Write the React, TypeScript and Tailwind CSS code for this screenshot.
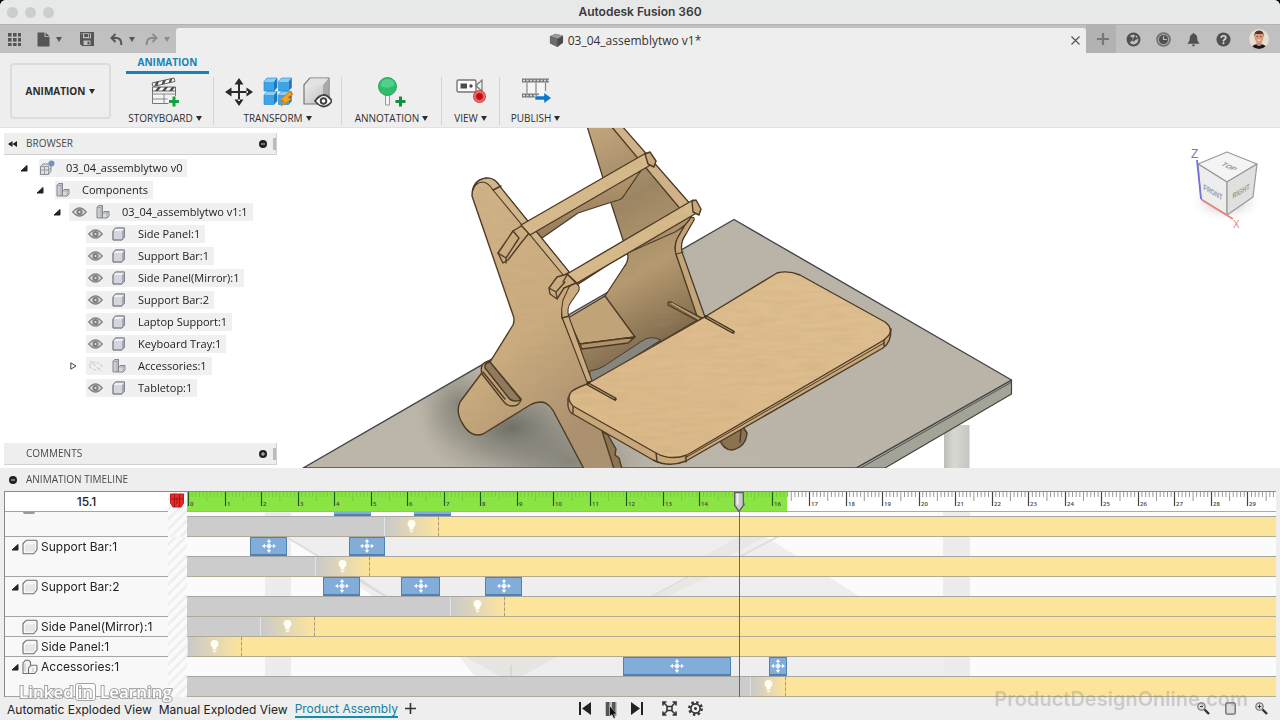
import React from "react";

const SECOND = 36.53;
const px = (t: number) => Math.round(t * SECOND) + 1;

type Track =
  | { kind: "moves"; moves: [number, number][] }
  | { kind: "visibility"; start: number; end: number };

type Group = { name: string; icon: "box" | "assembly"; open: boolean; tracks: Track[] };

const groups: Group[] = [
  {
    name: "Support Bar:1",
    icon: "box",
    open: true,
    tracks: [
      { kind: "moves", moves: [[1.7, 2.7], [4.4, 5.4]] },
      { kind: "visibility", start: 3.5, end: 4.98 },
    ],
  },
  {
    name: "Support Bar:2",
    icon: "box",
    open: true,
    tracks: [
      { kind: "moves", moves: [[3.7, 4.7], [5.83, 6.9], [8.13, 9.13]] },
      { kind: "visibility", start: 7.2, end: 8.68 },
    ],
  },
  { name: "Side Panel(Mirror):1", icon: "box", open: false, tracks: [{ kind: "visibility", start: 2, end: 3.48 }] },
  { name: "Side Panel:1", icon: "box", open: false, tracks: [{ kind: "visibility", start: 0, end: 1.48 }] },
  {
    name: "Accessories:1",
    icon: "assembly",
    open: true,
    tracks: [
      { kind: "moves", moves: [[11.9, 14.87], [15.9, 16.4]] },
      { kind: "visibility", start: 15.4, end: 16.38 },
    ],
  },
];

function Caret({ className = "" }: { className?: string }) {
  return (
    <svg viewBox="0 0 6 5" className={`h-[5px] w-[6px] shrink-0 ${className}`} fill="currentColor">
      <path d="M0 0h6L3 5z" />
    </svg>
  );
}

function BoxIcon({ className = "size-4" }: { className?: string }) {
  return (
    <svg viewBox="0 0 16 16" className={className} strokeLinejoin="round">
      <path d="M2 5 4.500 2H13.500v9L11 14H2z" fill="#d3d6df" stroke="#85878d" />
      <path d="M11 5v8.500l2.200-2.800V2.400z" fill="#a5a9b6" />
      <path d="M2.500 5 4.800 2.500h8.400L11 5z" fill="#eff0f4" />
      <path d="M2 5 4.500 2H13.500v9L11 14H2z" fill="none" stroke="#85878d" />
    </svg>
  );
}

function AssemblyIcon({ className = "size-4" }: { className?: string }) {
  return (
    <svg viewBox="0 0 16 16" className={className} strokeLinejoin="round" stroke="#84868c">
      <path d="M2 3.500 3.500 1.500h4V14H2z" fill="#cbced6" />
      <path d="M7.500 9 9 7.500h5V12l-2 2H7.500z" fill="#d9dbe2" />
      <path d="M7.500 9H12l2-1.500M12 9v5M2 3.500h4l1.500-2M6 3.500V14" fill="none" strokeWidth=".6" />
    </svg>
  );
}

function RowBox() {
  return (
    <svg viewBox="0 0 16 16" className="size-4 shrink-0" strokeLinejoin="round">
      <path d="M1 4.500 4.500 1.200H14a1 1 0 0 1 1 1V11l-3.500 3.800H2a1 1 0 0 1-1-1z" fill="#f6f6f6" stroke="#707070" strokeWidth="1.100" />
      <path d="M3 5.500h8v7H3z" fill="#e6e6e6" />
      <path d="M12 5v8.500" fill="none" stroke="#d4d4d4" />
    </svg>
  );
}

function RowAssembly() {
  return (
    <svg viewBox="0 0 16 16" className="size-4 shrink-0" strokeLinejoin="round" fill="#f4f4f4" stroke="#707070" strokeWidth="1.100">
      <path d="M1 4 3.500 1.200h3L8.500 3v11.500H1z" />
      <path d="M6.500 9 9 6.200h5.500L15 7v4.500l-2.500 3h-6z" />
      <path d="M3 4.500v8M11 9v4" stroke="#c4c4c4" />
    </svg>
  );
}

function Eye({ off = false }: { off?: boolean }) {
  if (off)
    return (
      <svg viewBox="0 0 15 10" className="h-[10px] w-[15px]" fill="none" stroke="#d2d2d2" strokeWidth="1.300">
        <path d="M1 5Q7.500-2.500 14 5Q7.500 12.500 1 5zM2 0l11 10" strokeDasharray="3 1.500" />
      </svg>
    );
  return (
    <svg viewBox="0 0 15 10" className="h-[10px] w-[15px]">
      <path d="M.800 5Q7.500-3 14.200 5Q7.500 13 .800 5z" fill="#dcdcdc" stroke="#858585" strokeWidth="1.400" />
      <circle cx="7.500" cy="5" r="3.100" fill="#808080" />
      <circle cx="7.500" cy="5" r="1.100" fill="#dedede" />
    </svg>
  );
}

function OpenMark() {
  return (
    <svg viewBox="0 0 8 8" className="size-[8px] shrink-0">
      <path d="M7 1.500V7H1z" fill="#222" stroke="#222" strokeLinejoin="round" />
    </svg>
  );
}

function TopIcons() {
  return (
    <div className="flex w-44 shrink-0 items-center bg-[#c0c0c0] pl-2 text-[#555]">
      <button aria-label="Data panel" className="mr-4">
        <svg viewBox="0 0 13 13" className="size-[13px]" fill="currentColor">
          {[0, 5, 10].map((y) => [0, 5, 10].map((x) => <rect key={`${x}-${y}`} x={x} y={y} width="3.600" height="3.600" />))}
        </svg>
      </button>
      <button aria-label="File" className="mr-[18px] flex items-center gap-1.5">
        <svg viewBox="0 0 13 15" className="h-[15px] w-[13px]" fill="currentColor">
          <path d="M.500.500h7v4.500h5v9.500H.500zM8.500.500l4 3.700h-4z" />
        </svg>
        <Caret />
      </button>
      <button aria-label="Save" className="mr-4">
        <svg viewBox="0 0 14 14" className="size-[14px]" fill="currentColor" fillRule="evenodd">
          <path d="M0 0h14v14H2L0 12zM3 1.200v5h8v-5zM3.500 8.500V13h7V8.500zM1.200 1.200v1h1v-1z" />
          <path d="M4.200 2h4v3h-4zM7.500 9.500h2v3h-2zM9 1.500h1v4H9z" />
        </svg>
      </button>
      <button aria-label="Undo" className="mr-[10px] flex items-center gap-1.5">
        <svg viewBox="0 0 13 13" className="size-[13px]" fill="none" stroke="currentColor" strokeWidth="2">
          <path d="M1.500 5H7q4.500.500 4.300 7M5.500 1 1.500 5l4 4" />
        </svg>
        <Caret />
      </button>
      <button aria-label="Redo" className="flex items-center gap-1.5 text-[#8b8b8b]">
        <svg viewBox="0 0 13 13" className="size-[13px]" fill="none" stroke="currentColor" strokeWidth="2">
          <path d="M11.500 5H6Q1.500 5.500 1.700 12M7.500 1l4 4-4 4" />
        </svg>
        <Caret />
      </button>
    </div>
  );
}

function AccountIcons() {
  return (
    <div className="flex w-[194px] shrink-0 items-center bg-[#c0c0c0] text-[#505050]">
      <button aria-label="New tab" className="mr-[10px] flex h-full w-[30px] items-center justify-center bg-[#b2b2b2] pl-1">
        <svg viewBox="0 0 12 12" className="size-3" stroke="#777" strokeWidth="2.200">
          <path d="M6 0v12M0 6h12" />
        </svg>
      </button>
      <button aria-label="Extensions" className="mr-[15px]">
        <svg viewBox="0 0 16 16" className="size-[15px]">
          <circle cx="8" cy="8" r="6.300" fill="none" stroke="currentColor" strokeWidth="2.200" />
          <path d="M2 3.500 7.500 6 6 9.500 2.500 12.500zM8.500 5.500q.500-2.500 3-2.500L10 5l1.500 1 2-1q-.500 3-3 3L8 10.500 6.500 9z" fill="currentColor" />
        </svg>
      </button>
      <button aria-label="Job status" className="mr-[16px]">
        <svg viewBox="0 0 16 16" className="size-[15px]">
          <circle cx="8" cy="8" r="7" fill="#a2a2a2" stroke="#707070" strokeWidth="1.600" />
          <circle cx="8" cy="8" r="4.800" fill="currentColor" />
          <path d="M8 4.500V8h3.500" fill="none" stroke="#c0c0c0" strokeWidth="1.300" />
        </svg>
      </button>
      <button aria-label="Notifications" className="mr-[16px]">
        <svg viewBox="0 0 14 16" className="h-[15px] w-[13px]" fill="currentColor">
          <path d="M7 1q1 0 1 1.200Q11 3 11 7q0 3.500 2.500 5.500H.500Q3 10.500 3 7q0-4 3-4.800Q6 1 7 1zM5.500 13.500h3Q8.500 15.500 7 15.500T5.500 13.500z" />
        </svg>
      </button>
      <button aria-label="Help" className="mr-[18px]">
        <svg viewBox="0 0 16 16" className="size-[15px]">
          <circle cx="8" cy="8" r="7.500" fill="currentColor" />
          <path d="M5.500 6.200Q5.700 4 8 4t2.500 2.200Q10.500 7.500 8 9v1" fill="none" stroke="#ddd" strokeWidth="1.700" />
          <circle cx="8" cy="12" r="1.100" fill="#ddd" />
        </svg>
      </button>
      <button aria-label="Account">
        <svg viewBox="0 0 20 20" className="size-[20px]">
          <clipPath id="avatar"><circle cx="10" cy="10" r="10" /></clipPath>
          <g clipPath="url(#avatar)">
            <path d="M0 0h20v20H0z" fill="#e6dfd2" />
            <path d="M2 20q1-5 8-5t8 5z" fill="#191a1e" />
            <path d="M7.500 12h5v4q-2.500 2-5 0z" fill="#c98a68" />
            <ellipse cx="10" cy="8.500" rx="4.300" ry="5.600" fill="#d9997a" />
            <path d="M5.400 8Q4.500 1.500 10 1.400T14.600 8l-1-3.200q-3.500.500-7 0z" fill="#5b3420" />
            <path d="M8 10.800h4q-2 2-4 0z" fill="#fff" />
            <path d="M7.500 7.600h1.500M11 7.600h1.500" stroke="#6a3b28" strokeWidth=".8" />
          </g>
        </svg>
      </button>
    </div>
  );
}

function StoryboardIcon() {
  return (
    <svg viewBox="0 0 30 30" className="size-[30px]" strokeLinejoin="round">
      <path d="M2.500 12.500h23v14h-23z" fill="#f3f3f3" stroke="#777" />
      <path d="M2.500 17h23M2.500 22h15M14 22v4.500M14 17v5" stroke="#888" fill="none" />
      <path d="M2.500 10h23v4h-23zM2 6 24 1l1 3.500L3 9.500z" fill="#f6f6f6" stroke="#666" />
      <path d="m5 14 3-4h3l-3 4zm7 0 3-4h3l-3 4zm7 0 3-4h3l-3 4zM4.500 9 6 5l3-.700L7.500 8.300zm7-1.600L13 3.500l3-.700-1.500 4zm7-1.600L20 2l2.500-.500L21 5.300z" fill="#4a4a4a" />
      <path d="M24 19v11M18.500 24.500h11" stroke="#eee" strokeWidth="5" />
      <path d="M24 19.500v10M19 24.500h10" stroke="#12a33b" strokeWidth="3" />
    </svg>
  );
}

function MoveIcon() {
  return (
    <svg viewBox="0 0 30 30" className="size-[30px]" fill="#2a2a2a">
      <path d="M14 6h2v18h-2zM6 14h18v2H6zM15 1l4.500 6.500h-9zM15 29l4.500-6.500h-9zM1 15l6.500-4.500v9zM29 15l-6.500-4.500v9z" />
    </svg>
  );
}

function ExplodeIcon() {
  const cubes = [[1, 1], [15.5, 1], [1, 14.5], [15.5, 14.5]];
  return (
    <svg viewBox="0 0 30 30" className="size-[30px]" strokeLinejoin="round">
      {cubes.map(([x, y]) => (
        <g key={`${x}-${y}`} transform={`translate(${x} ${y})`}>
          <path d="M0 3.500h10V13H0z" fill="#3da4e6" />
          <path d="M0 3.500 3 0h10l-3 3.500z" fill="#8bcdf6" />
          <path d="M10 3.500 13 0v9.500L10 13z" fill="#1679c2" />
          <path d="M0 3.500 3 0h10v9.500L10 13H0z" fill="none" stroke="#1f83c8" strokeWidth=".6" />
        </g>
      ))}
      <path d="m26 15-9 8 4 1-3 5 11-7-4-1.500L30 17z" fill="#f8a11f" stroke="#c97708" strokeWidth=".8" />
    </svg>
  );
}

function ShowIcon() {
  return (
    <svg viewBox="0 0 30 32" className="h-8 w-[30px]" strokeLinejoin="round">
      <defs>
        <linearGradient id="cubeFront" x2="1" y2="1"><stop stopColor="#f2f2f2" /><stop offset="1" stopColor="#bdbdbd" /></linearGradient>
      </defs>
      <path d="M2 9 8 2h19v20l-5 6H2z" fill="url(#cubeFront)" stroke="#777" strokeWidth="1.200" />
      <path d="M21 9l5.500-6.500v19L21 28z" fill="#a9a9a9" />
      <path d="M3 8.500 8.500 2.500H26L21 8.500z" fill="#e2e2e2" />
      <path d="M13 25q9-12 17 0q-8 11-17 0z" fill="#fff" stroke="#444" strokeWidth="1.800" />
      <circle cx="21.500" cy="25" r="2.800" fill="none" stroke="#444" strokeWidth="2" />
    </svg>
  );
}

function AnnotationIcon() {
  return (
    <svg viewBox="0 0 30 30" className="size-[30px]">
      <path d="M8.500 17h4v11h-4z" fill="#f4f4f4" stroke="#999" />
      <circle cx="10.500" cy="9.500" r="9" fill="#2fbd6c" stroke="#25a75b" />
      <path d="M3.500 9Q4 2 10.500 2q6.500 0 7 6Q12 13 3.500 9z" fill="#4fd189" />
      <path d="M23.500 19.500v10M18.500 24.500h10" stroke="#168f3a" strokeWidth="3" />
    </svg>
  );
}

function ViewIcon() {
  return (
    <svg viewBox="0 0 30 30" className="size-[30px]">
      <rect x="1" y="3" width="19" height="12" rx="1.500" fill="#fbfbfb" stroke="#777" strokeWidth="1.400" />
      <path d="M20 8.500 26 3v11l-3-2.500z" fill="#eee" stroke="#777" strokeWidth="1.200" />
      <path d="M4.500 6.500H11v5H4.500z" fill="#4b4b4b" />
      <circle cx="15" cy="9" r="1.700" fill="#4b4b4b" />
      <circle cx="23.500" cy="19.500" r="6.500" fill="#e23b3b" />
      <circle cx="23.500" cy="19.500" r="4.800" fill="none" stroke="#f09494" />
      <circle cx="23.500" cy="19.500" r="3" fill="#b30d16" />
    </svg>
  );
}

function PublishIcon() {
  return (
    <svg viewBox="0 0 30 30" className="size-[30px]">
      <path d="M5 4.500h20v14H5z" fill="#f5f5f5" />
      <path d="M1 3.500h27M1 18.500h17" stroke="#777" strokeWidth="4" />
      <path d="M2 3.500h26M2 18.500h17" stroke="#ddd" strokeWidth="1.500" strokeDasharray="2 1.500" />
      <path d="M6 5.500v11M15 5.500v11M24.500 5.500V14" stroke="#888" strokeWidth="1.200" />
      <path d="M14 19h9v-3.500l7.500 5.500L23 26.500V23h-9z" fill="#0b77cf" stroke="#fff" strokeWidth=".5" />
    </svg>
  );
}

function ToolGroup({ label, width, children }: { label: string; width: string; children: React.ReactNode }) {
  return (
    <div className={`flex shrink-0 flex-col items-center pt-px ${width}`}>
      <div className="flex h-[34px] items-center gap-[9px]">{children}</div>
      <button className="flex h-[18px] items-center gap-[3px] whitespace-nowrap text-[10px] font-medium text-[#2e2e2e]">
        {label}
        <Caret />
      </button>
    </div>
  );
}

function Divider() {
  return <div className="h-12 w-px shrink-0 bg-[#d4d4d4]" />;
}

function Tool({ label, children }: { label: string; children: React.ReactNode }) {
  return <button aria-label={label}>{children}</button>;
}

function Ribbon() {
  return (
    <div className="flex h-[75px] shrink-0 border-b border-[#e2e2e2] bg-[#eeeeee] pl-[10px]">
      <button className="mt-[10px] flex h-[56px] w-[101px] shrink-0 items-center justify-center gap-1 rounded-[4px] border-2 border-[#dcdcdc] text-[10px] font-bold text-[#2b2b2b]">
        ANIMATION
        <Caret />
      </button>
      <div className="ml-[15px] flex flex-col">
        <button className="flex h-[22px] w-[83px] items-end justify-center border-b-[3px] border-[#1683b5] text-[10px] font-bold leading-[18px] text-[#1683b5]">
          ANIMATION
        </button>
        <div className="flex items-center">
          <ToolGroup label="STORYBOARD" width="w-[78px]">
            <Tool label="New storyboard"><StoryboardIcon /></Tool>
          </ToolGroup>
          <div className="w-[9px]" />
          <Divider />
          <ToolGroup label="TRANSFORM" width="w-[127px]">
            <Tool label="Move"><MoveIcon /></Tool>
            <Tool label="Explode"><ExplodeIcon /></Tool>
            <Tool label="Show or hide"><ShowIcon /></Tool>
          </ToolGroup>
          <Divider />
          <ToolGroup label="ANNOTATION" width="w-[99px]">
            <Tool label="Callout"><AnnotationIcon /></Tool>
          </ToolGroup>
          <Divider />
          <ToolGroup label="VIEW" width="w-[57px]">
            <Tool label="Record view"><ViewIcon /></Tool>
          </ToolGroup>
          <Divider />
          <ToolGroup label="PUBLISH" width="w-[71px]">
            <Tool label="Publish video"><PublishIcon /></Tool>
          </ToolGroup>
        </div>
      </div>
    </div>
  );
}

function Scene() {
  return (
    <svg viewBox="0 128 1280 340" preserveAspectRatio="xMidYMax slice" className="absolute inset-0 h-full w-full" strokeLinejoin="round" strokeLinecap="round">
      <defs>
        <linearGradient id="table" x1="0" y1="1" x2="1" y2="0"><stop stopColor="#bcb5a8" /><stop offset="1" stopColor="#b9b3a8" /></linearGradient>
        <linearGradient id="leftWood" x1="0" y1="0" x2=".5" y2="1"><stop stopColor="#d0b388" /><stop offset=".6" stopColor="#cbac7f" /><stop offset="1" stopColor="#ab9170" /></linearGradient>
        <linearGradient id="backWood" x1="0" y1="0" x2=".3" y2="1"><stop stopColor="#c9ad82" /><stop offset=".4" stopColor="#9c8564" /><stop offset=".7" stopColor="#b59a70" /><stop offset="1" stopColor="#806b4e" /></linearGradient>
        <linearGradient id="tray" x1="0" y1="1" x2="1" y2="0"><stop stopColor="#dbb888" /><stop offset="1" stopColor="#dfbf91" /></linearGradient>
        <linearGradient id="leg" x2="1"><stop stopColor="#bcbdb5" /><stop offset=".4" stopColor="#d8d9d2" /><stop offset="1" stopColor="#c5c6bf" /></linearGradient>
        <linearGradient id="under" x1="0" y1="0" x2=".3" y2="1"><stop stopColor="#bfa178" /><stop offset="1" stopColor="#937b5a" /></linearGradient>
        <radialGradient id="shade"><stop stopColor="#595a50" stopOpacity=".85" /><stop offset=".5" stopColor="#6d6d63" stopOpacity=".5" /><stop offset="1" stopColor="#8d8a80" stopOpacity="0" /></radialGradient>
        <filter id="grain" x="0" y="0" width="100%" height="100%">
          <feTurbulence type="fractalNoise" baseFrequency=".035 .22" numOctaves="4" seed="4" />
          <feColorMatrix values="0 0 0 0 .45  0 0 0 0 .32  0 0 0 0 .15  1.1 0 0 0 -.42" />
          <feComposite in2="SourceGraphic" operator="in" />
        </filter>
        <clipPath id="tableClip"><path d="M303 468 734 219.500 1011.500 380 856 468z" /></clipPath>
      </defs>
      <path d="M944 425h25.500v43H944z" fill="url(#leg)" />
      <path d="M1011.500 380v14L885 468h-29z" fill="#a3a497" stroke="#45443f" strokeWidth="1.200" />
      <path d="M303 468 734 219.500 1011.500 380 856 468z" fill="url(#table)" stroke="#45464a" strokeWidth="1.400" />
      <path d="M859 469 1011 382.500" stroke="#55544c" strokeWidth="1" />
      <g clipPath="url(#tableClip)">
        <ellipse cx="512" cy="428" rx="92" ry="54" fill="url(#shade)" opacity=".9" />
        <ellipse cx="570" cy="462" rx="85" ry="46" fill="url(#shade)" opacity=".6" />
        <ellipse cx="457" cy="402" rx="42" ry="46" fill="url(#shade)" opacity=".5" />
      </g>
      <g stroke="#4c3a26" strokeWidth="1.300">
        <path d="M587 126 603 178 623 240 628 256Q628 262 624 267L605 296 566 330 588 374 662 341 699 319 676 254Q674 246 677 239L690 216 611 126z" fill="url(#backWood)" />
        <path d="M611 126h11l70 80-10 5z" fill="#cfb287" />
        <path d="m568 318 37-22 30 41-55 7z" fill="#c0a376" />
        <path d="m580 344 55-7-7 6-46 6z" fill="#b09168" />
        <path d="M590 371Q598 370 604 366L642 341Q650 335 661 340L591 384z" fill="#85877f" strokeWidth="1" />
        <path d="M689 218q6-2 5 2l-8 14q-6 8-4 18l23 65-7 2-22-65q-2-8 1-15z" fill="#c3a57a" />
        <path d="m677 254 6-2" />
        <path d="M668 305q-1-4 3-3l31 16-4 3z" fill="#7f6946" />
        <path d="M672 303.500 699 319" fill="none" stroke="#c9ad82" strokeWidth="1.400" />
      </g>
      <g stroke="#4c3a26" strokeWidth="1.300">
        <path d="m528 234 114-65-19 28q-2 3-8 4l-37 12-36 25z" fill="url(#under)" />
        <path d="m577 283 115-68q-4 10-17 17l-52 23-46 30z" fill="url(#under)" />
      </g>
      <g stroke="#4c3a26" strokeWidth="1.400">
        <path d="m601 431 12 38h9l-3-11-4-3 1-6-8-14z" fill="#8d7552" />
        <path d="M472 196Q472 180 486 178 496 178 501 188L569 272 577 285 565 303Q561 309 562 317L590 386 602 431 614 469H584L556 416Q550 403 542 402 535 402 530 405L483 434Q472 438 464 426 455 413 460 402L490 362 513 325Q515 320 513 315z" fill="url(#leftWood)" />
        <path d="M473 190Q476 178 489 178 496 179 501 188L569 272l-5 4-71-86q-5-8-11-8-7 1-9 8z" fill="#d2b68b" strokeWidth="1.100" />
        <path d="m493 190 8-4" />
        <path d="M577 284q-2-2-8 3l-6 13q-2 9-1 17l25 65 5-1-23-64q-3-8 2-15l7-10q3-5-1-8z" fill="#cbac80" strokeWidth="1.100" />
        <path d="m562 318 7-2" />
        <path d="m498 253 15-22 10-6 7 7-9 11-13 17-5 3z" fill="#ccae80" />
        <path d="m498 253 8 5 13-20-6-7M506 258v5" fill="none" />
        <path d="m521 225 125-72 8 10-124 72z" fill="#d6b98b" />
        <path d="m645 154 5-2 6 9-2 6-6-3z" fill="#c7a97c" />
        <path d="m567 274 126-74 7 11-123 72z" fill="#d6b98b" />
        <path d="m692 201 4-1 5 9-2 6-6-3z" fill="#c7a97c" />
        <path d="m549 288 8-11 10-3 9 9-12 5-7 11-7-5z" fill="#ccae80" />
        <path d="m549 288 7 4 9-10M556 292l1 6M567 275l-4 7" fill="none" />
        <path d="M482 374q-3-11 7-13l32 38q-1 7-9 7-5 0-8-4z" fill="#c1a377" />
        <path d="m485 368 23 29q4 6 13 3l-31-38q-6 1-5 6z" fill="#8f7a5d" />
        <path d="m483 372 22 27" fill="none" />
      </g>
      <g stroke="#4c3a26" strokeWidth="1.400">
        <path d="M719 438q4 12 13 12 14-3 15-17l-4-6z" fill="#8b7251" />
        <path d="m741 430-1 12" />
        <path d="M568 398v8q1 6 5 8l80 46q16 8 33 1l197-113q8-5 8-19z" fill="#c8a87a" />
        <path d="M571 392Q574 389 587 384L703 318 777 273Q788 270 800 275L885 322Q893 328 889 335L884 340 687 455Q670 461 656 453L573 406Q566 399 571 392z" fill="url(#tray)" />
        <path d="m656 453 1 8M686 456v6M573 407v6M884 340v6" />
        <path d="m685 458 199-115" strokeWidth="1" />
        <path d="m588 384 27 15M706 317l27 15" stroke="#3c2f20" strokeWidth="3.600" />
        <path d="m589 384.500 25 14M707 317.500l25 14" stroke="#a98d63" strokeWidth="1.200" />
      </g>
      <g opacity=".3">
        <path filter="url(#grain)" d="M571 392 587 384 703 318 777 273 800 275 888 326 884 340 687 455 656 453z" />
        <path filter="url(#grain)" d="M474 196 482 183 493 191 563 276 571 284 561 317 588 386 614 469H584L556 416 542 402 483 434 464 426 460 402 490 362 513 325z" />
        <path filter="url(#grain)" d="M587 128 603 178 623 240 650 330 697 318 676 254 690 216 611 128z" />
      </g>
    </svg>
  );
}

function ViewCube() {
  return (
    <svg viewBox="0 0 90 100" className="absolute right-[10px] top-[12px] h-[100px] w-[90px]" fontFamily="'Liberation Sans', sans-serif">
      <defs>
        <radialGradient id="cubeShadow"><stop stopColor="#888" stopOpacity=".7" /><stop offset="1" stopColor="#fff" stopOpacity="0" /></radialGradient>
      </defs>
      <ellipse cx="46" cy="62" rx="38" ry="21" fill="url(#cubeShadow)" />
      <g stroke="#999" strokeLinejoin="round" strokeWidth="1.200">
        <path d="m18 24 29-12 30 12-30 18z" fill="#f4f4f4" />
        <path d="m18 24 29 18v33L21 59z" fill="#ededed" />
        <path d="M47 42 77 24l-4 33-26 18z" fill="#e0e0e0" />
      </g>
      <path d="m17 20 4 39" stroke="#7474d8" strokeWidth="1.800" />
      <path d="m22 60 31 19" stroke="#ee8383" strokeWidth="1.800" />
      <g fill="#999" fontWeight="bold" textAnchor="middle">
        <text transform="matrix(.78 .45 0 1.150 33 55)" fontSize="7">FRONT</text>
        <text transform="matrix(.78 -.45 0 1.150 61 54)" fontSize="7">RIGHT</text>
        <text transform="matrix(.8 .4 -.8 .5 47 28)" fontSize="8">TOP</text>
      </g>
      <text x="11" y="18" fontSize="12" fill="#7777cc">Z</text>
      <text x="53" y="88" fontSize="10" fill="#ea8080">X</text>
    </svg>
  );
}

function PanelBar({ title, collapse, sign }: { title: string; collapse?: boolean; sign: "minus" | "plus" }) {
  return (
    <div className="flex h-[22px] w-[273px] items-center border-b border-r border-[#d0d0d0] bg-[#eeeeee] text-[10px] font-medium text-[#4a4a4a]">
      <div className="w-[22px] pl-1">
        {collapse && (
          <svg viewBox="0 0 9 6" className="h-[6px] w-[9px]" fill="#222"><path d="M0 3 4.500 0v6zM4.500 3 9 0v6z" /></svg>
        )}
      </div>
      <span>{title}</span>
      <button aria-label={`Toggle ${title.toLowerCase()}`} className="ml-auto mr-[6px]">
        <RoundSign sign={sign} />
      </button>
      <div className="h-3 w-[3px] bg-[#bbb]" />
    </div>
  );
}

function RoundSign({ sign }: { sign: "minus" | "plus" }) {
  return (
    <svg viewBox="0 0 8 8" className="size-[8px]">
      <circle cx="4" cy="4" r="4" fill="#222" />
      <path d={sign === "minus" ? "M2 4h4" : "M2 4h4M4 2v4"} stroke="#ccc" strokeWidth="1" />
    </svg>
  );
}

const parts = [
  { name: "Side Panel:1" },
  { name: "Support Bar:1" },
  { name: "Side Panel(Mirror):1" },
  { name: "Support Bar:2" },
  { name: "Laptop Support:1" },
  { name: "Keyboard Tray:1" },
  { name: "Accessories:1", hidden: true },
  { name: "Tabletop:1" },
];

function Browser() {
  return (
    <ul className="pt-[2px] text-[11px] text-[#222]">
      <li className="flex h-[22px] items-center pl-[16px]">
        <OpenMark />
        <span className="ml-[11px] flex h-[18px] items-center bg-[#f0f0f0] pr-[5px]">
          <svg viewBox="0 0 16 16" className="size-4" strokeLinejoin="round">
            <path d="M1.500 6.500 4 4h8v7l-2.500 3.500h-8z" fill="#dcdfe7" stroke="#888a91" />
            <path d="M1.500 10h8l2.500-2M5.500 6.500v8M9.500 6.500v8M1.500 6.500h8L12 4" fill="none" stroke="#888a91" strokeWidth=".8" />
            <circle cx="12.500" cy="3.500" r="3" fill="#6f93c4" />
          </svg>
          <span className="ml-[11px]">03_04_assemblytwo v0</span>
        </span>
      </li>
      <li className="flex h-[22px] items-center pl-[32px]">
        <OpenMark />
        <span className="ml-[11px] flex h-[18px] items-center bg-[#f0f0f0] pr-[5px]">
          <AssemblyIcon />
          <span className="ml-[11px]">Components</span>
        </span>
      </li>
      <li className="flex h-[22px] items-center pl-[49px]">
        <OpenMark />
        <span className="ml-[8px] flex h-[18px] items-center bg-[#f0f0f0] pl-[3px] pr-[5px]">
          <Eye />
          <AssemblyIcon className="ml-[8px] size-4" />
          <span className="ml-[11px]">03_04_assemblytwo v1:1</span>
        </span>
      </li>
      {parts.map((p) => (
        <li key={p.name} className="flex h-[22px] items-center pl-[65px]">
          <span className="flex w-[17px] pl-px">
            {p.hidden && (
              <svg viewBox="0 0 7 8" className="h-2 w-[7px]" fill="none" stroke="#444"><path d="M.800.800 6 4 .800 7.200z" /></svg>
            )}
          </span>
          <span className="flex h-[18px] items-center bg-[#f0f0f0] pl-[2px] pr-[5px]">
            <Eye off={p.hidden} />
            {p.hidden ? <AssemblyIcon className="ml-[8px] size-4" /> : <BoxIcon className="ml-[8px] size-4" />}
            <span className="ml-[11px]">{p.name}</span>
          </span>
        </li>
      ))}
    </ul>
  );
}

function Bulb() {
  return (
    <svg viewBox="0 0 9 13" className="h-[13px] w-[9px]" fill="#fffef5">
      <path d="M4.500 0Q8.500.200 8.500 4q0 1.800-2 3.500V9.500h-4V7.500Q.500 5.800.500 4 .500.200 4.500 0zM2.800 10.500h3.400v1L4.500 12.500l-1.700-1z" />
    </svg>
  );
}

function MoveGlyph() {
  return (
    <svg viewBox="0 0 14 14" className="size-[14px]" fill="#f4f9ff">
      <path d="M7 0l2.300 3H4.700zM7 14l2.300-3H4.700zM0 7l3-2.300v4.600zM14 7l-3-2.300v4.600zM6.400 3h1.200v8H6.400zM3 6.400h8v1.200H3zM5.200 5.200h3.600v3.600H5.200z" />
    </svg>
  );
}

function MoveClip({ from, to }: { from: number; to: number }) {
  return (
    <div
      className="absolute inset-y-0 flex items-center justify-center border border-b-2 border-[#4f81b5] bg-[#82add9]"
      style={{ left: px(from), width: px(to) - px(from) }}
    >
      <MoveGlyph />
    </div>
  );
}

function TrackRow({ track }: { track: Track }) {
  if (track.kind === "moves")
    return (
      <div className="relative h-5 border-b border-[#a5a5a5]">
        {track.moves.map(([a, b]) => <MoveClip key={a} from={a} to={b} />)}
      </div>
    );
  return (
    <div className="flex h-5 border-b border-[#b3aa92] bg-[#fde49b]">
      <div className="shrink-0 border-r border-[#e4e4e4] bg-[#cccccc]" style={{ width: px(track.start) }} />
      <div
        className="flex shrink-0 items-center justify-center border-r border-dashed border-[#b39a5c] bg-linear-to-r from-[#c9c9c9] to-[#fde49b]"
        style={{ width: px(track.end) - px(track.start) }}
      >
        <Bulb />
      </div>
    </div>
  );
}

function TrackGhost() {
  return (
    <svg viewBox="187 512 1089 185" preserveAspectRatio="xMinYMin slice" className="absolute inset-0 h-full w-full">
      <path d="M187 512h1089v185H187z" fill="#fbfbfb" />
      <path d="M265 512h26v185h-26zM943 512h27v185h-27z" fill="#ececec" />
      <path d="M287 536 460 657 490 697h453V650L765 536z" fill="#eeeeee" />
      <path d="m288 538 223 134 255-137M330 560l181 117 270-142" fill="none" stroke="#dcdcda" strokeWidth="1.500" />
      <path d="M466 657h90l-35 20h-20z" fill="#e5e5e2" />
      <path d="M704 556 740 536h26l-36 20zM650 597l42-20h16l-42 20z" fill="#e7e7e5" />
      <path d="M511 665v14" stroke="#cbcbc8" />
    </svg>
  );
}

function Ruler() {
  const seconds = Array.from({ length: 30 }, (_, i) => i);
  return (
    <svg className="block h-[20px] w-full" fontFamily="'Open Sans', sans-serif">
      <path d="M0 0h600v20H0z" fill="#8ae544" />
      {seconds.map((s) => (
        <g key={s}>
          {[1, 2, 3, 4, 5, 6, 7, 8, 9].map((d) => (
            <path
              key={d}
              d={`M${s * SECOND + (d * SECOND) / 10 + 1.5} 0v${d === 5 ? 9 : 5}`}
              stroke={s < 16 || (s === 16 && d < 5) ? "#78cb3b" : "#999"}
              strokeWidth="1"
            />
          ))}
          <path d={`M${Math.round(s * SECOND) + 1.5} 0v14`} stroke={s < 17 ? "#1f5c14" : "#444"} strokeWidth="1.200" />
          <text x={Math.round(s * SECOND) + 3} y="14" fontSize="6" fontWeight="600" fill="#444">{s}</text>
        </g>
      ))}
    </svg>
  );
}

const hatch = "w-[19px] shrink-0 bg-[repeating-linear-gradient(135deg,#fafafa_0_4px,#efefef_4px_7px)]";

function Timeline() {
  return (
    <section className="relative z-10 shrink-0 bg-[#eeeeee] px-1">
      <header className="flex h-[23px] items-center text-[10px] font-medium text-[#4a4a4a]">
        <button aria-label="Collapse timeline" className="ml-[5px] mr-[9px]"><RoundSign sign="minus" /></button>
        ANIMATION TIMELINE
      </header>
      <div className="relative border-l border-t border-[#8a8a8a] bg-[#f8f8f8] font-['Inter','Liberation_Sans',sans-serif]">
        <div className="flex h-[20px]">
          <div className="flex w-[163px] shrink-0 items-center justify-center border-b border-[#a5a5a5] bg-white text-[12px] font-medium text-[#222]">15.1</div>
          <div className={`flex items-start justify-center pr-[2px] pt-px ${hatch}`}>
            <svg viewBox="0 0 14 15" className="h-[15px] w-[14px]">
              <path d="M.500 1h13v9L11 14H3L.500 10z" fill="#e52a2a" stroke="#c01a1a" />
              <path d="M4.500 1v13M9.500 1v13M7 4v7M1 6h12" stroke="#a51616" />
            </svg>
          </div>
          <div className="min-w-0 flex-1 overflow-hidden border-b border-[#aaa] bg-white"><Ruler /></div>
        </div>
        <div className="relative flex flex-col">
          <div className="absolute inset-y-0 left-[182px] right-0 overflow-hidden"><TrackGhost /></div>
          <div className="flex h-[25px]">
            <div className="w-[163px] shrink-0 overflow-hidden border-b border-[#a5a5a5] pl-[18px]">
              <div className="h-[2px] w-3 rounded-b bg-[#999]" />
            </div>
            <div className={hatch} />
            <div className="relative flex-1">
              <div className="relative h-[5px] border-b border-[#a5a5a5]">
                <MoveClipEdge from={4} to={5} />
                <MoveClipEdge from={6.2} to={7.2} />
              </div>
              <TrackRow track={{ kind: "visibility", start: 5.4, end: 6.87 }} />
            </div>
          </div>
          {groups.map((g) => (
            <div key={g.name} className="flex">
              <div className="w-[163px] shrink-0 border-b border-[#a5a5a5]">
                <div className="flex h-[19px] items-center whitespace-nowrap pl-[6px] text-[12px] text-[#222]">
                  <span className="flex w-[11px]">{g.open && <OpenMark />}</span>
                  {g.icon === "box" ? <RowBox /> : <RowAssembly />}
                  <span className="ml-[3px]">{g.name}</span>
                </div>
              </div>
              <div className={hatch} />
              <div className="relative min-w-0 flex-1 overflow-hidden">
                {g.tracks.map((t) => <TrackRow key={t.kind} track={t} />)}
              </div>
            </div>
          ))}
        </div>
        <div className="absolute bottom-0 left-[729px] top-0 flex w-[10px] flex-col items-center">
          <svg viewBox="0 0 10 20" className="h-[20px] w-[10px] shrink-0">
            <path d="M.700.500h8.600v13L5 19.500.700 13.500z" fill="#c9cbcc" stroke="#5c5f5c" strokeWidth="1.300" />
            <path d="M3.500 1.500v11" stroke="#f4f4f4" strokeWidth="1.800" />
          </svg>
          <div className="w-px flex-1 bg-[#666]" />
        </div>
      </div>
      <div className="pointer-events-none absolute bottom-[-4px] left-[19px] flex items-center font-['Open_Sans',sans-serif] text-[17px] font-semibold leading-[18px] text-white [-webkit-text-stroke:2px_#a3a3a3] [paint-order:stroke_fill]">
        Linked
        <span className="mx-px flex h-[18px] w-[21px] items-center justify-center rounded-[3px] border border-[#a3a3a3] bg-white leading-4">in</span>
        <span className="ml-[3px]">Learning</span>
      </div>
      <div className="pointer-events-none absolute bottom-[-14px] right-8 font-['Inter',sans-serif] text-[20px] font-semibold leading-6 text-[#8a8a8a]/35">
        ProductDesignOnline.com
      </div>
    </section>
  );
}

function MoveClipEdge({ from, to }: { from: number; to: number }) {
  return (
    <div
      className="absolute inset-y-0 border-b-2 border-[#4f7fb0] bg-[#82add9]"
      style={{ left: px(from), width: px(to) - px(from) }}
    />
  );
}

function Footer() {
  return (
    <footer className="relative flex h-[23px] shrink-0 items-center bg-[#eeeeee] pl-[7px] font-['Inter','Liberation_Sans',sans-serif] text-[12px] text-[#222]">
      <nav className="flex h-full gap-[7px] whitespace-nowrap">
        <button className="pt-[2px]">Automatic Exploded View</button>
        <button className="pt-[2px]">Manual Exploded View</button>
        <button className="mb-[2px] border-b-2 border-[#1b8aa8] pt-[5px] leading-[14px] text-[#14819f]">Product Assembly</button>
        <button aria-label="Add storyboard">
          <svg viewBox="0 0 11 11" className="size-[11px]" stroke="#333" strokeWidth="1.600"><path d="M5.500 0v11M0 5.500h11" /></svg>
        </button>
      </nav>
      <div className="absolute left-[579px] flex items-center text-[#222]">
        <button aria-label="Go to start" className="mr-[14px]">
          <svg viewBox="0 0 12 13" className="h-[13px] w-[12px]" fill="currentColor"><path d="M0 0h2v13H0zM12 0v13L3 6.500z" /></svg>
        </button>
        <button aria-label="Pause" className="relative mr-[14px] bg-[#c4c4c4]">
          <svg viewBox="0 0 12 14" className="h-[14px] w-[12px]" fill="#555"><path d="M1 0h3.500v14H1zM7 0h3.500v14H7z" /></svg>
          <svg viewBox="0 0 9 14" className="absolute left-[4px] top-[3px] h-[14px] w-[9px]"><path d="M.500.500v11l2.500-2 1.700 4 1.700-.800-1.700-3.700h3.300z" fill="#111" stroke="#eee" strokeWidth=".5" /></svg>
        </button>
        <button aria-label="Go to end" className="mr-[19px]">
          <svg viewBox="0 0 12 13" className="h-[13px] w-[12px]" fill="currentColor"><path d="M10 0h2v13h-2zM0 0v13l9-6.500z" /></svg>
        </button>
        <button aria-label="Fit timeline" className="mr-[11px]">
          <svg viewBox="0 0 15 15" className="size-[15px]" fill="none" stroke="#333" strokeWidth="1.600">
            <path d="M1 4.500V1h3.500M10.500 1H14v3.500M14 10.500V14h-3.500M4.500 14H1v-3.500M1.500 1.500l4 4M13.500 1.500l-4 4M13.500 13.500l-4-4M1.500 13.500l4-4M5 5.500h5v4H5z" />
          </svg>
        </button>
        <button aria-label="Settings">
          <svg viewBox="0 0 15 15" className="size-[15px]" fill="none" stroke="#333">
            <circle cx="7.500" cy="7.500" r="6.200" strokeWidth="2.400" strokeDasharray="2.430 2.430" />
            <circle cx="7.500" cy="7.500" r="4.600" strokeWidth="1.600" />
            <circle cx="7.500" cy="7.500" r="1.500" fill="#333" stroke="none" />
          </svg>
        </button>
      </div>
      <div className="ml-auto mr-[12px] flex items-center gap-[15px]">
        <button aria-label="Zoom out"><Magnifier sign="M3 4.500h3" /></button>
        <button aria-label="Zoom to fit">
          <svg viewBox="0 0 11 13" className="h-[13px] w-[11px]"><rect x=".800" y=".800" width="9.400" height="11.400" rx="1.500" fill="#ddd" stroke="#666" strokeWidth="1.300" /></svg>
        </button>
        <button aria-label="Zoom in" className="ml-1"><Magnifier sign="M2.700 4.500h3.600M4.500 2.700v3.600" /></button>
      </div>
    </footer>
  );
}

function Magnifier({ sign }: { sign: string }) {
  return (
    <svg viewBox="0 0 13 13" className="size-[13px]">
      <circle cx="4.500" cy="4.500" r="3.700" fill="#dedede" stroke="#777" strokeWidth="1.200" />
      <path d={sign} stroke="#333" />
      <path d="m7.500 7.500 4.500 4.500" stroke="#333" strokeWidth="2.400" />
    </svg>
  );
}

export default function App() {
  return (
    <div className="h-screen bg-black">
      <div className="flex h-full min-w-0 flex-col overflow-hidden rounded-t-[6px] bg-[#eeeeee] font-['Open_Sans','Noto_Sans',sans-serif]">
        <div className="flex h-6 shrink-0 items-center bg-[#e7e9e8] px-[7px]">
          <div className="flex w-24 gap-[7px]">
            <span className="size-[11px] rounded-full bg-[#cccdcd]" />
            <span className="size-[11px] rounded-full bg-[#cccdcd]" />
            <span className="size-[11px] rounded-full bg-[#cccdcd]" />
          </div>
          <h1 className="flex-1 text-center font-['Inter','Liberation_Sans',sans-serif] text-[12px] font-semibold text-[#3a3a3a]">Autodesk Fusion 360</h1>
          <div className="w-24" />
        </div>
        <div className="flex h-[29px] shrink-0 border-t border-[#b2b2b2] bg-[#c0c0c0]">
          <TopIcons />
          <div className="mt-[3px] flex min-w-0 flex-1 items-center rounded-t-[3px] bg-[#eeeeee] pr-[3px]">
            <div className="flex flex-1 items-center justify-center gap-1 pl-[6px] text-[12px] text-[#333]">
              <svg viewBox="0 0 16 16" className="size-[15px]" strokeLinejoin="round">
                <path d="m1 3.500 6-2.700 8 2v7.700l-6 4.500-8-4z" fill="#4b4b4b" />
                <path d="m1 3.500 8 2.500 6-3.200-8-2z" fill="#999" />
                <path d="M1 3.500 9 6v9l-8-4z" fill="#6c6c6c" />
              </svg>
              03_04_assemblytwo v1*
            </div>
            <button aria-label="Close tab" className="p-[3px]">
              <svg viewBox="0 0 9 9" className="size-[9px]" stroke="#555" strokeWidth="1.200"><path d="m.500.500 8 8M8.500.500l-8 8" /></svg>
            </button>
          </div>
          <AccountIcons />
        </div>
        <Ribbon />
        <main className="relative flex min-h-0 flex-1 flex-col overflow-hidden bg-white pb-[3px] pl-1 pt-[5px]">
          <Scene />
          <ViewCube />
          <div className="relative flex flex-1 flex-col items-start">
            <PanelBar title="BROWSER" collapse sign="minus" />
            <Browser />
            <div className="mt-auto"><PanelBar title="COMMENTS" sign="plus" /></div>
          </div>
        </main>
        <Timeline />
        <Footer />
      </div>
    </div>
  );
}
